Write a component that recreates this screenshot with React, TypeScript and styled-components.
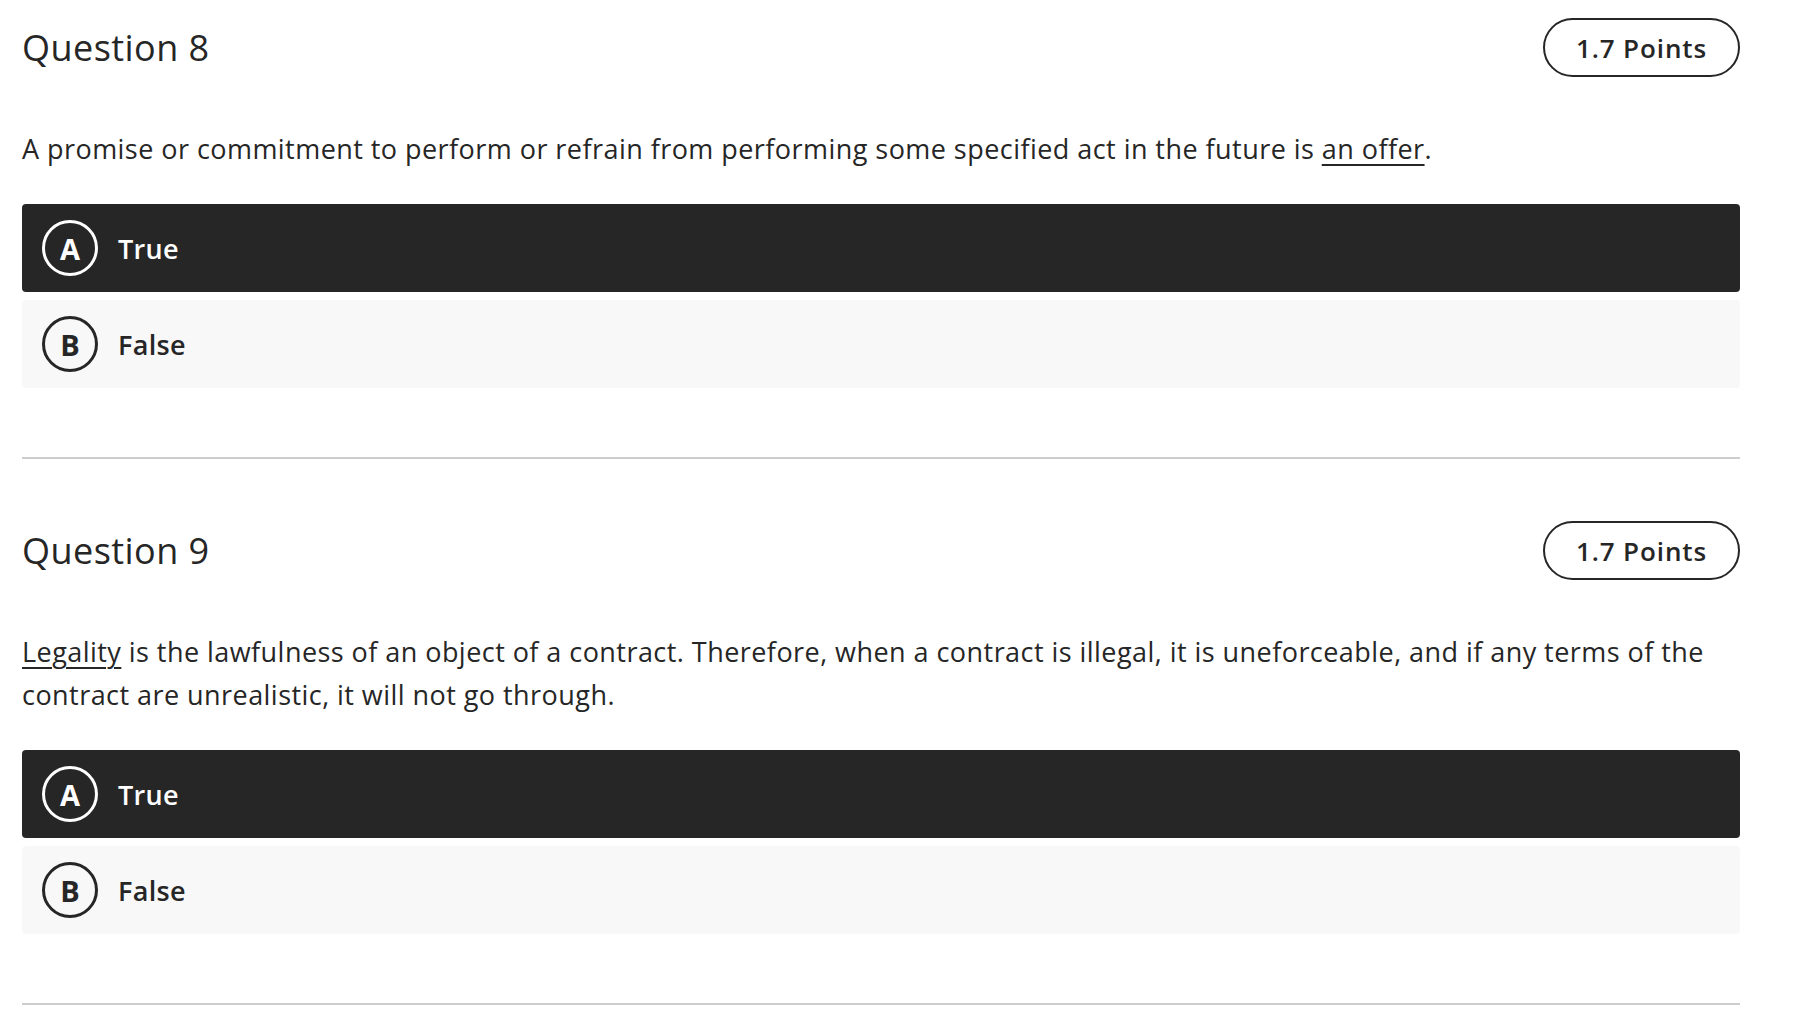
import React from "react";
import styled, { createGlobalStyle } from "styled-components";

const GlobalStyle = createGlobalStyle`
  html, body {
    margin: 0;
    padding: 0;
    background: #ffffff;
  }

  body {
    font-family: "Open Sans", "Noto Sans", "Liberation Sans", sans-serif;
    color: #262626;
  }
`;

interface Choice {
  letter: string;
  label: string;
  selected: boolean;
}

interface Question {
  number: number;
  points: string;
  prompt: React.ReactNode;
  choices: Choice[];
}

const Page = styled.main`
  width: 1718px;
  padding: 18px 0 0 22px;
`;

const Section = styled.section`
  display: flex;
  flex-direction: column;

  & + & {
    margin-top: 62px;
  }
`;

const Header = styled.div`
  display: flex;
  align-items: center;
  justify-content: space-between;
  height: 59px;
`;

const Title = styled.h2`
  margin: 0;
  font-size: 36px;
  font-weight: 500;
  letter-spacing: 0.45px;
  line-height: 1.2;
  color: #262626;
`;

const Points = styled.div`
  box-sizing: border-box;
  height: 59px;
  width: 197px;
  display: flex;
  align-items: center;
  justify-content: center;
  border: 2px solid #262626;
  border-radius: 30px;
  font-size: 26px;
  font-weight: 600;
  letter-spacing: 0.9px;
  color: #262626;
`;

const Prompt = styled.p`
  margin: 50px 0 0;
  font-size: 27px;
  line-height: 43px;
  font-weight: 400;
  letter-spacing: 0.45px;
  color: #262626;

  u {
    text-decoration-thickness: 1.5px;
    text-underline-offset: 5px;
  }
`;

const Choices = styled.div`
  display: flex;
  flex-direction: column;
  gap: 8px;
  margin-top: 34px;
`;

const Option = styled.div<{ $selected: boolean }>`
  display: flex;
  align-items: center;
  gap: 20px;
  height: 88px;
  padding-left: 20px;
  border-radius: 4px;
  background: ${({ $selected }) => ($selected ? "#262626" : "#f8f8f8")};
  color: ${({ $selected }) => ($selected ? "#ffffff" : "#262626")};
`;

const Letter = styled.span`
  box-sizing: border-box;
  width: 56px;
  height: 56px;
  border-radius: 50%;
  border: 3px solid currentColor;
  display: flex;
  align-items: center;
  justify-content: center;
  font-size: 29px;
  font-weight: 700;
  line-height: 1;
`;

const Label = styled.span`
  font-size: 27px;
  font-weight: 600;
  letter-spacing: 0.3px;
`;

const Divider = styled.hr`
  margin: 69px 0 0;
  border: none;
  height: 2px;
  background: #cdcdcd;
`;

const questions: Question[] = [
  {
    number: 8,
    points: "1.7 Points",
    prompt: (
      <>
        A promise or commitment to perform or refrain from performing some
        specified act in the future is <u>an offer</u>.
      </>
    ),
    choices: [
      { letter: "A", label: "True", selected: true },
      { letter: "B", label: "False", selected: false },
    ],
  },
  {
    number: 9,
    points: "1.7 Points",
    prompt: (
      <>
        <u>Legality</u> is the lawfulness of an object of a contract.
        Therefore, when a contract is illegal, it is uneforceable, and if any
        terms of the contract are unrealistic, it will not go through.
      </>
    ),
    choices: [
      { letter: "A", label: "True", selected: true },
      { letter: "B", label: "False", selected: false },
    ],
  },
];

const App = () => {
  return (
    <>
      <GlobalStyle />
      <Page>
        {questions.map((q) => (
          <Section key={q.number}>
            <Header>
              <Title>Question {q.number}</Title>
              <Points>{q.points}</Points>
            </Header>
            <Prompt>{q.prompt}</Prompt>
            <Choices>
              {q.choices.map((c) => (
                <Option key={c.letter} $selected={c.selected}>
                  <Letter>{c.letter}</Letter>
                  <Label>{c.label}</Label>
                </Option>
              ))}
            </Choices>
            <Divider />
          </Section>
        ))}
      </Page>
    </>
  );
};

export default App;
